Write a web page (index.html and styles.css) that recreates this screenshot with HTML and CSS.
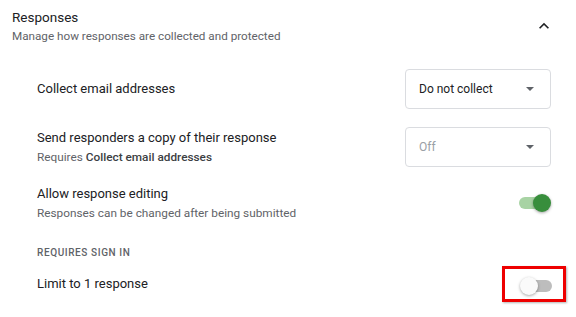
FILE: index.html
```html
<!DOCTYPE html>
<html lang="en">
<head>
    <meta charset="UTF-8">
    <title>Responses settings</title>
    <link rel="stylesheet" href="styles.css">
</head>
<body>
    <section class="panel">
        <!-- header -->
        <div class="panel-header">
            <div>
                <h2>Responses</h2>
                <p class="sub">Manage how responses are collected and protected</p>
            </div>
            <svg class="chevron" width="20" height="20" viewBox="0 0 24 24">
                <path d="M7.41 15.41L12 10.83l4.59 4.58L18 14l-6-6-6 6z" fill="#202124"/>
            </svg>
        </div>

        <div class="rows">
            <div class="row row-select">
                <div class="label">Collect email addresses</div>
                <div class="select">
                    <span>Do not collect</span>
                    <span class="caret"></span>
                </div>
            </div>

            <div class="row row-select2">
                <div>
                    <div class="label">Send responders a copy of their response</div>
                    <div class="hint">Requires <b>Collect email addresses</b></div>
                </div>
                <div class="select disabled">
                    <span>Off</span>
                    <span class="caret"></span>
                </div>
            </div>

            <div class="row row-toggle">
                <div>
                    <div class="label">Allow response editing</div>
                    <div class="hint">Responses can be changed after being submitted</div>
                </div>
                <div class="toggle on"><span class="knob"></span></div>
            </div>

            <div class="group-title">REQUIRES SIGN IN</div>

            <div class="row row-last">
                <div class="label">Limit to 1 response</div>
                <div class="highlight">
                    <div class="toggle"><span class="knob"></span></div>
                </div>
            </div>
        </div>
    </section>
</body>
</html>
```

FILE: styles.css
```css
* {
    margin: 0;
    padding: 0;
    box-sizing: border-box;
    font-family: 'Roboto', 'Liberation Sans', sans-serif;
}

body {
    background-color: #fff;
    width: 576px;
    height: 317px;
    overflow: hidden;
}

.panel {
    padding: 8px 0 0 12px;
}

.panel-header {
    display: flex;
    justify-content: space-between;
    align-items: flex-start;
    padding-right: 22px;
}

.panel-header h2 {
    font-size: 13.5px;
    font-weight: 400;
    color: #202124;
    line-height: 18px;
}

.panel-header .sub {
    font-size: 11.7px;
    color: #5f6368;
    line-height: 16px;
    margin-top: 2px;
}

.chevron {
    margin-top: 8px;
}

.rows {
    padding: 25px 25px 0 25px;
}

.row {
    display: flex;
    justify-content: space-between;
    align-items: center;
}

.label {
    font-size: 13px;
    color: #202124;
    line-height: 16px;
}

.hint {
    font-size: 11.8px;
    color: #5f6368;
    line-height: 14px;
    margin-top: 4px;
}

.hint b {
    font-weight: 500;
    color: #3c4043;
}

.select {
    width: 146px;
    height: 40px;
    border: 1px solid #dadce0;
    border-radius: 4px;
    display: flex;
    align-items: center;
    justify-content: space-between;
    padding: 0 16px 0 13px;
    font-size: 12px;
    color: #202124;
}

.select.disabled {
    color: #9aa0a6;
}

.caret {
    width: 0;
    height: 0;
    border-left: 4px solid transparent;
    border-right: 4px solid transparent;
    border-top: 4px solid #5f6368;
}

.row-select2 {
    margin-top: 18px;
}

.row-toggle {
    margin-top: 19px;
}

.toggle {
    position: relative;
    width: 28px;
    height: 12px;
    border-radius: 6px;
    background-color: #bdbdbd;
    margin-right: 4px;
}

.toggle .knob {
    position: absolute;
    top: -3px;
    left: -4px;
    width: 18px;
    height: 18px;
    border-radius: 50%;
    background-color: #fafafa;
    box-shadow: 0 1px 3px rgba(0, 0, 0, 0.35);
}

.toggle.on {
    background-color: #a8d3a4;
}

.toggle.on .knob {
    left: auto;
    right: -4px;
    background-color: #388e3c;
}

.group-title {
    font-size: 10px;
    font-weight: 500;
    letter-spacing: 0.6px;
    color: #5f6368;
    line-height: 12px;
    margin-top: 27px;
}

.row-last {
    margin-top: 7px;
}

.highlight {
    width: 64px;
    height: 36px;
    border: 3px solid #ee0000;
    display: flex;
    align-items: center;
    justify-content: center;
    margin-right: -15px;
    box-shadow: 1px 1px 2px rgba(0, 0, 0, 0.3);
}

.highlight .toggle {
    margin: 3px -8px 0 0;
}
```
